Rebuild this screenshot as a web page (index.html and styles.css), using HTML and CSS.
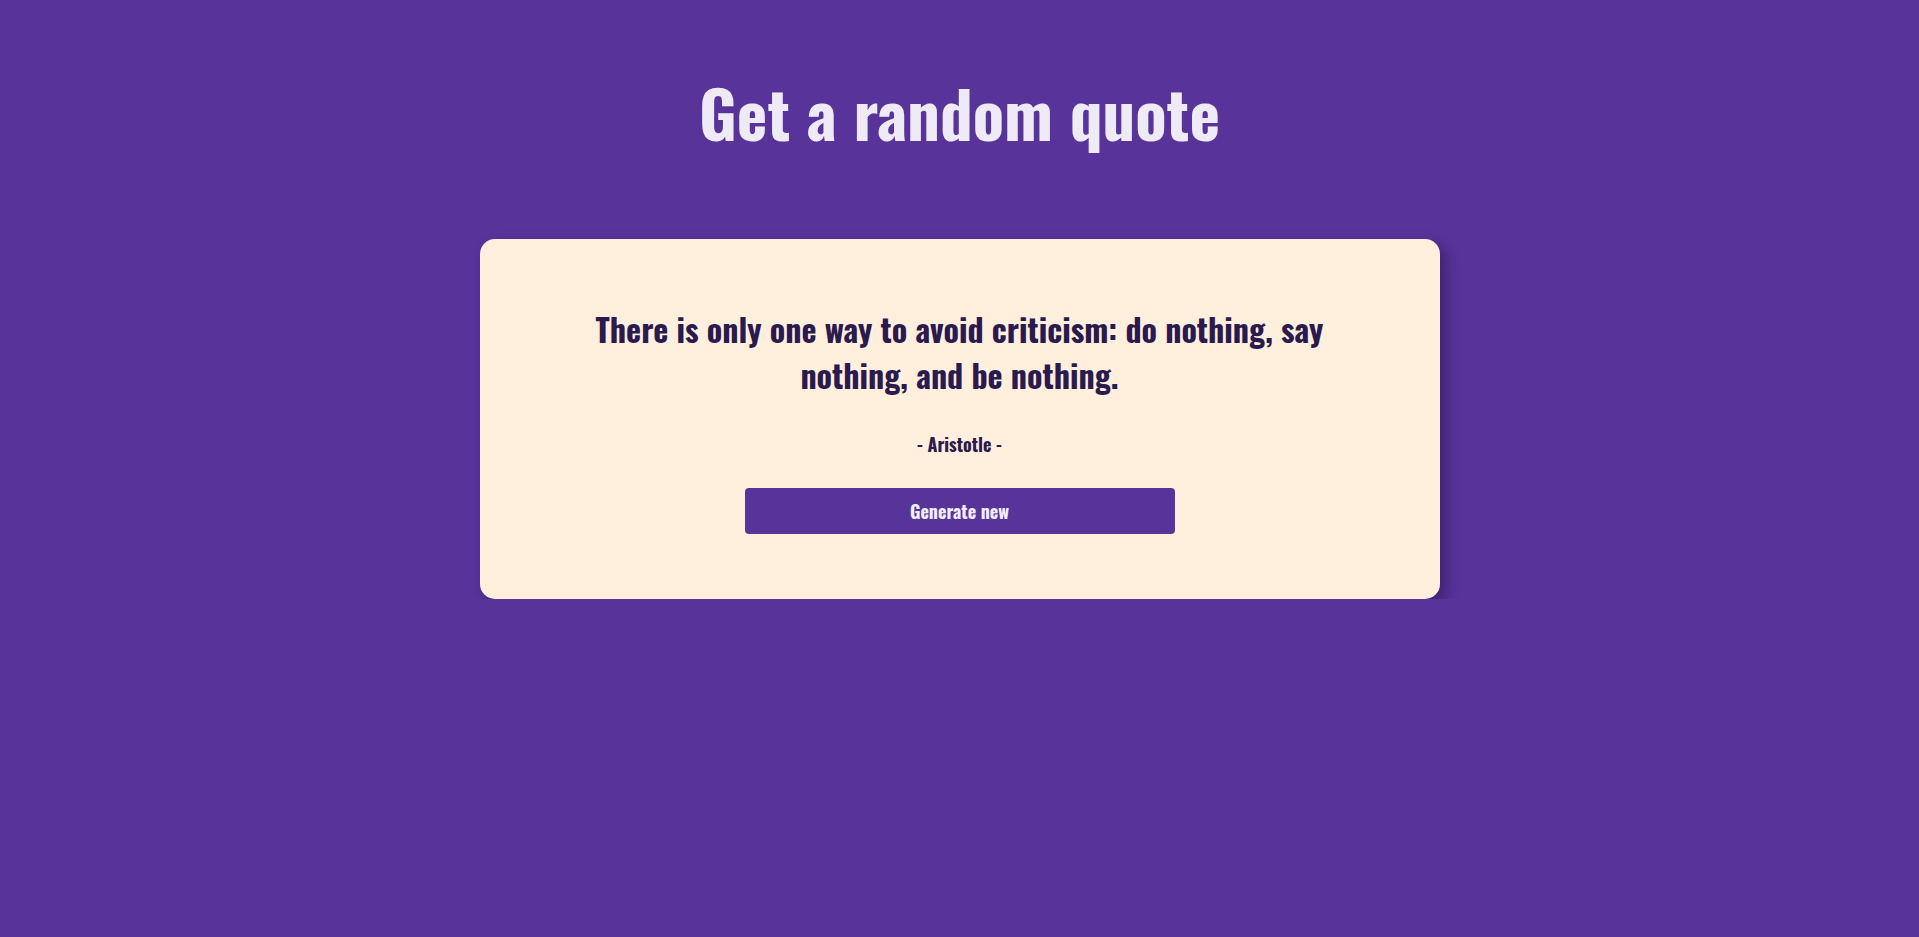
FILE: index.html
```html
<!DOCTYPE html>
<html lang="en">
<head>
    <meta charset="UTF-8">
    <meta name="viewport" content="width=device-width, initial-scale=1.0">
    <title>Random Quote</title>
    <link rel="stylesheet" href="styles.css">
</head>
<body>

    <h1 class="title">Get a random quote</h1>

    <div class="quote-card">
        <p class="quote-text">There is only one way to avoid criticism: do nothing, say nothing, and be nothing.</p>
        <p class="quote-author">- Aristotle -</p>
        <button class="new-quote">Generate new</button>
    </div>

</body>
</html>
```

FILE: styles.css
```css
body {
    font-family: "Oswald", "Roboto", sans-serif;
    margin: 0;
    background-color: #58349a;
    color: #2a1a4e;
}

.title {
    margin: 0;
    padding-top: 66px;
    text-align: center;
    font-size: 65px;
    font-weight: 700;
    line-height: 1.4;
    color: #eeeaf6;
}

.quote-card {
    width: 960px;
    box-sizing: border-box;
    margin: 82px auto 0 auto;
    padding: 67px 110px 65px 110px;
    background-color: #ffefdc;
    border-radius: 15px;
    box-shadow: 6px 6px 14px rgba(30, 10, 60, 0.45);
    display: flex;
    flex-direction: column;
    align-items: center;
}

.quote-text {
    margin: 0;
    font-size: 32px;
    font-weight: 700;
    line-height: 46px;
    text-align: center;
}

.quote-author {
    margin: 33px 0 0 0;
    font-size: 18px;
    font-weight: 700;
}

.new-quote {
    margin-top: 31px;
    width: 430px;
    height: 46px;
    border: none;
    border-radius: 4px;
    background-color: #58349a;
    color: #f2eefa;
    font-family: inherit;
    font-weight: 700;
    font-size: 18px;
    cursor: pointer;
}
```
